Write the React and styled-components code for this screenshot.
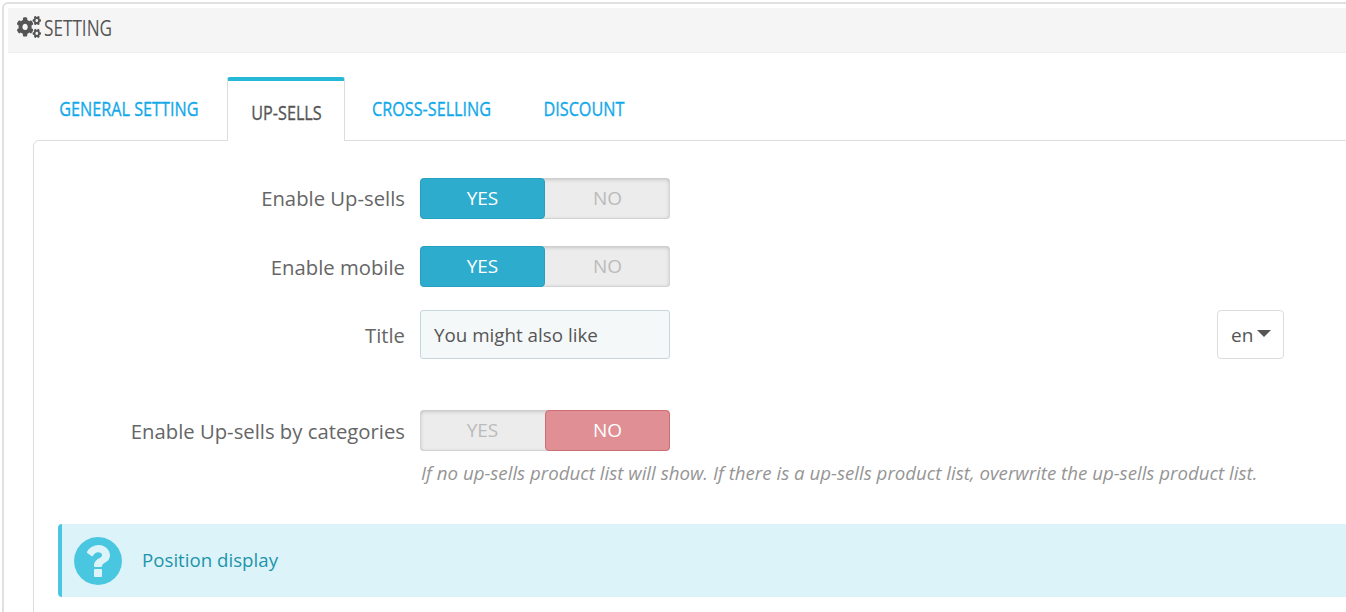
import * as React from "react";
import styled, { createGlobalStyle } from "styled-components";
import { FaCogs } from "react-icons/fa";

const GlobalStyle = createGlobalStyle`
  html, body {
    margin: 0;
    padding: 0;
    height: 612px;
    overflow: hidden;
    background: #fff;
    font-family: "Open Sans", "Liberation Sans", sans-serif;
  }
`;

const Panel = styled.section`
  box-sizing: border-box;
  width: 1400px;
  height: 640px;
  margin: 2px 0 0 2px;
  padding: 4px 0 0 4px;
  border: 1px solid #e0e0e0;
  border-width: 2px 0 0 2px;
  border-top-left-radius: 6px;
`;

const PanelHeading = styled.header`
  display: flex;
  align-items: center;
  gap: 3px;
  box-sizing: border-box;
  height: 45px;
  padding: 0 0 6px 9px;
  background: #f5f5f5;
  border-bottom: 1px solid #eee;
  color: #555;
`;

const CogsIcon = styled(FaCogs)`
  width: 24px;
  height: 22px;
  color: #555;
`;

const HeadingText = styled.span`
  display: inline-block;
  font-size: 22px;
  transform: scaleX(0.78);
  transform-origin: left center;
`;

const TabBar = styled.nav`
  display: flex;
  height: 63px;
  margin: 24px 0 0 25px;
  align-items: flex-end;
  position: relative;
  z-index: 1;
`;

const Tab = styled.div`
  box-sizing: border-box;
  display: flex;
  justify-content: center;
  align-items: center;
  height: ${(p) => (p.$active ? "64px" : "63px")};
  width: ${(p) => p.$width}px;
  margin-bottom: ${(p) => (p.$active ? "-1px" : "0")};
  padding-top: ${(p) => (p.$active ? "3px" : "0")};
  padding-right: ${(p) => p.$pad || 0}px;
  background: ${(p) => (p.$active ? "#fff" : "transparent")};
  color: ${(p) => (p.$active ? "#555" : "#12a9ea")};
  border: ${(p) => (p.$active ? "1px solid #ddd" : "none")};
  border-top: ${(p) => (p.$active ? "4px solid #25b9d7" : "none")};
  border-bottom: none;
  border-radius: 3px 3px 0 0;
`;

const TabLabel = styled.span`
  display: inline-block;
  white-space: nowrap;
  font-size: 20px;
  -webkit-text-stroke: 0.35px currentColor;
  transform: scaleX(0.81);
`;

const TabBody = styled.div`
  box-sizing: border-box;
  margin-left: 25px;
  height: 480px;
  padding: 37px 0 0 24px;
  border: 1px solid #ddd;
  border-radius: 6px 0 0 0;
`;

const FormRow = styled.div`
  display: grid;
  grid-template-columns: 347px 250px 517px auto;
  column-gap: 15px;
  align-items: start;
  margin-bottom: ${(p) => p.$gap}px;
`;

const FieldLabel = styled.label`
  text-align: right;
  white-space: nowrap;
  font-size: 20.3px;
  line-height: 26px;
  padding-top: ${(p) => p.$top}px;
  color: #666;
`;

const Switch = styled.div`
  display: flex;
  box-sizing: border-box;
  width: 250px;
  height: 41px;
  background: #ececec;
  border-radius: 4px;
  box-shadow: inset 0 1px 4px rgba(0, 0, 0, 0.22), inset 0 -1px 1px rgba(0, 0, 0, 0.06);
`;

const SwitchOption = styled.div`
  box-sizing: border-box;
  flex: 0 0 125px;
  display: flex;
  align-items: center;
  justify-content: center;
  padding-bottom: 2px;
  font-size: 19px;
  border-radius: 4px;
  color: #bbb;
  ${(p) =>
    p.$on === "yes" &&
    `background: #2eacce; color: #fff; border: 1px solid #25a0c1;`}
  ${(p) =>
    p.$on === "no" &&
    `background: #e08f95; color: #fff; border: 1px solid #cd6e74;`}
`;

const TitleInput = styled.div`
  box-sizing: border-box;
  width: 250px;
  height: 49px;
  padding: 0 13px;
  display: flex;
  align-items: center;
  background: #f5f8f9;
  border: 1px solid #c7d6db;
  border-radius: 3px;
  font-size: 18.8px;
  color: #555;
`;

const LangButton = styled.div`
  box-sizing: border-box;
  display: flex;
  align-items: center;
  gap: 4px;
  width: 67px;
  height: 49px;
  padding-left: 13px;
  border: 1px solid #ddd;
  border-radius: 4px;
  font-size: 19px;
  color: #555;
`;

const Caret = styled.span`
  width: 0;
  height: 0;
  margin-top: -3px;
  border-left: 7px solid transparent;
  border-right: 7px solid transparent;
  border-top: 7px solid #555;
`;

const HelpText = styled.p`
  margin: 9px 0 0 363px;
  font-size: 18.7px;
  line-height: 25px;
  font-style: italic;
  color: #959595;
  white-space: nowrap;
`;

const Alert = styled.div`
  box-sizing: border-box;
  display: flex;
  align-items: center;
  gap: 16px;
  height: 73px;
  margin-top: 39px;
  padding: 0 0 0 8px;
  background: #dcf4f9;
  border-left: 4px solid #4ac7e0;
  border-radius: 4px 0 0 4px;
  color: #1e94ab;
  font-size: 18.7px;
`;

const AlertText = styled.span`
  padding-bottom: 2px;
`;

const QuestionIcon = () => (
  <svg width="56" height="56" viewBox="0 0 1792 1792" fill="#4ac7e0">
    <path d="M1024 1376v-192q0-14-9-23t-23-9h-192q-14 0-23 9t-9 23v192q0 14 9 23t23 9h192q14 0 23-9t9-23zm256-672q0-88-55.5-163t-138.5-116-170-41q-243 0-371 213-15 24 8 42l132 100q7 6 19 6 16 0 25-12 53-68 86-92 34-24 86-24 48 0 85.5 26t37.5 59q0 38-20 61t-68 45q-63 28-115.5 86.5t-52.5 125.5v36q0 14 9 23t23 9h192q14 0 23-9t9-23q0-19 21.5-49.5t54.5-49.5q32-18 49-28.5t46-35 44.5-48 28-60.5 12.5-81zm384 192q0 209-103 385.5t-279.5 279.5-385.5 103-385.5-103-279.5-279.5-103-385.5 103-385.5 279.5-279.5 385.5-103 385.5 103 279.5 279.5 103 385.5z" />
  </svg>
);

const App = () => (
  <>
    <GlobalStyle />
    <Panel>
      <PanelHeading>
        <CogsIcon preserveAspectRatio="none" />
        <HeadingText>SETTING</HeadingText>
      </PanelHeading>
      <TabBar>
        <Tab $width={194} $pad={3}><TabLabel>GENERAL SETTING</TabLabel></Tab>
        <Tab $width={118} $active><TabLabel>UP-SELLS</TabLabel></Tab>
        <Tab $width={174}><TabLabel>CROSS-SELLING</TabLabel></Tab>
        <Tab $width={129}><TabLabel>DISCOUNT</TabLabel></Tab>
      </TabBar>
      <TabBody>
        <FormRow $gap={27}>
          <FieldLabel $top={7}>Enable Up-sells</FieldLabel>
          <Switch>
            <SwitchOption $on="yes">YES</SwitchOption>
            <SwitchOption>NO</SwitchOption>
          </Switch>
        </FormRow>
        <FormRow $gap={23}>
          <FieldLabel $top={8}>Enable mobile</FieldLabel>
          <Switch>
            <SwitchOption $on="yes">YES</SwitchOption>
            <SwitchOption>NO</SwitchOption>
          </Switch>
        </FormRow>
        <FormRow $gap={51}>
          <FieldLabel $top={12}>Title</FieldLabel>
          <TitleInput>You might also like</TitleInput>
          <span />
          <LangButton>en<Caret /></LangButton>
        </FormRow>
        <FormRow $gap={0}>
          <FieldLabel $top={8}>Enable Up-sells by categories</FieldLabel>
          <Switch>
            <SwitchOption>YES</SwitchOption>
            <SwitchOption $on="no">NO</SwitchOption>
          </Switch>
        </FormRow>
        <HelpText>
          If no up-sells product list will show. If there is a up-sells product list, overwrite the up-sells product list.
        </HelpText>
        <Alert>
          <QuestionIcon />
          <AlertText>Position display</AlertText>
        </Alert>
      </TabBody>
    </Panel>
  </>
);

export default App;
